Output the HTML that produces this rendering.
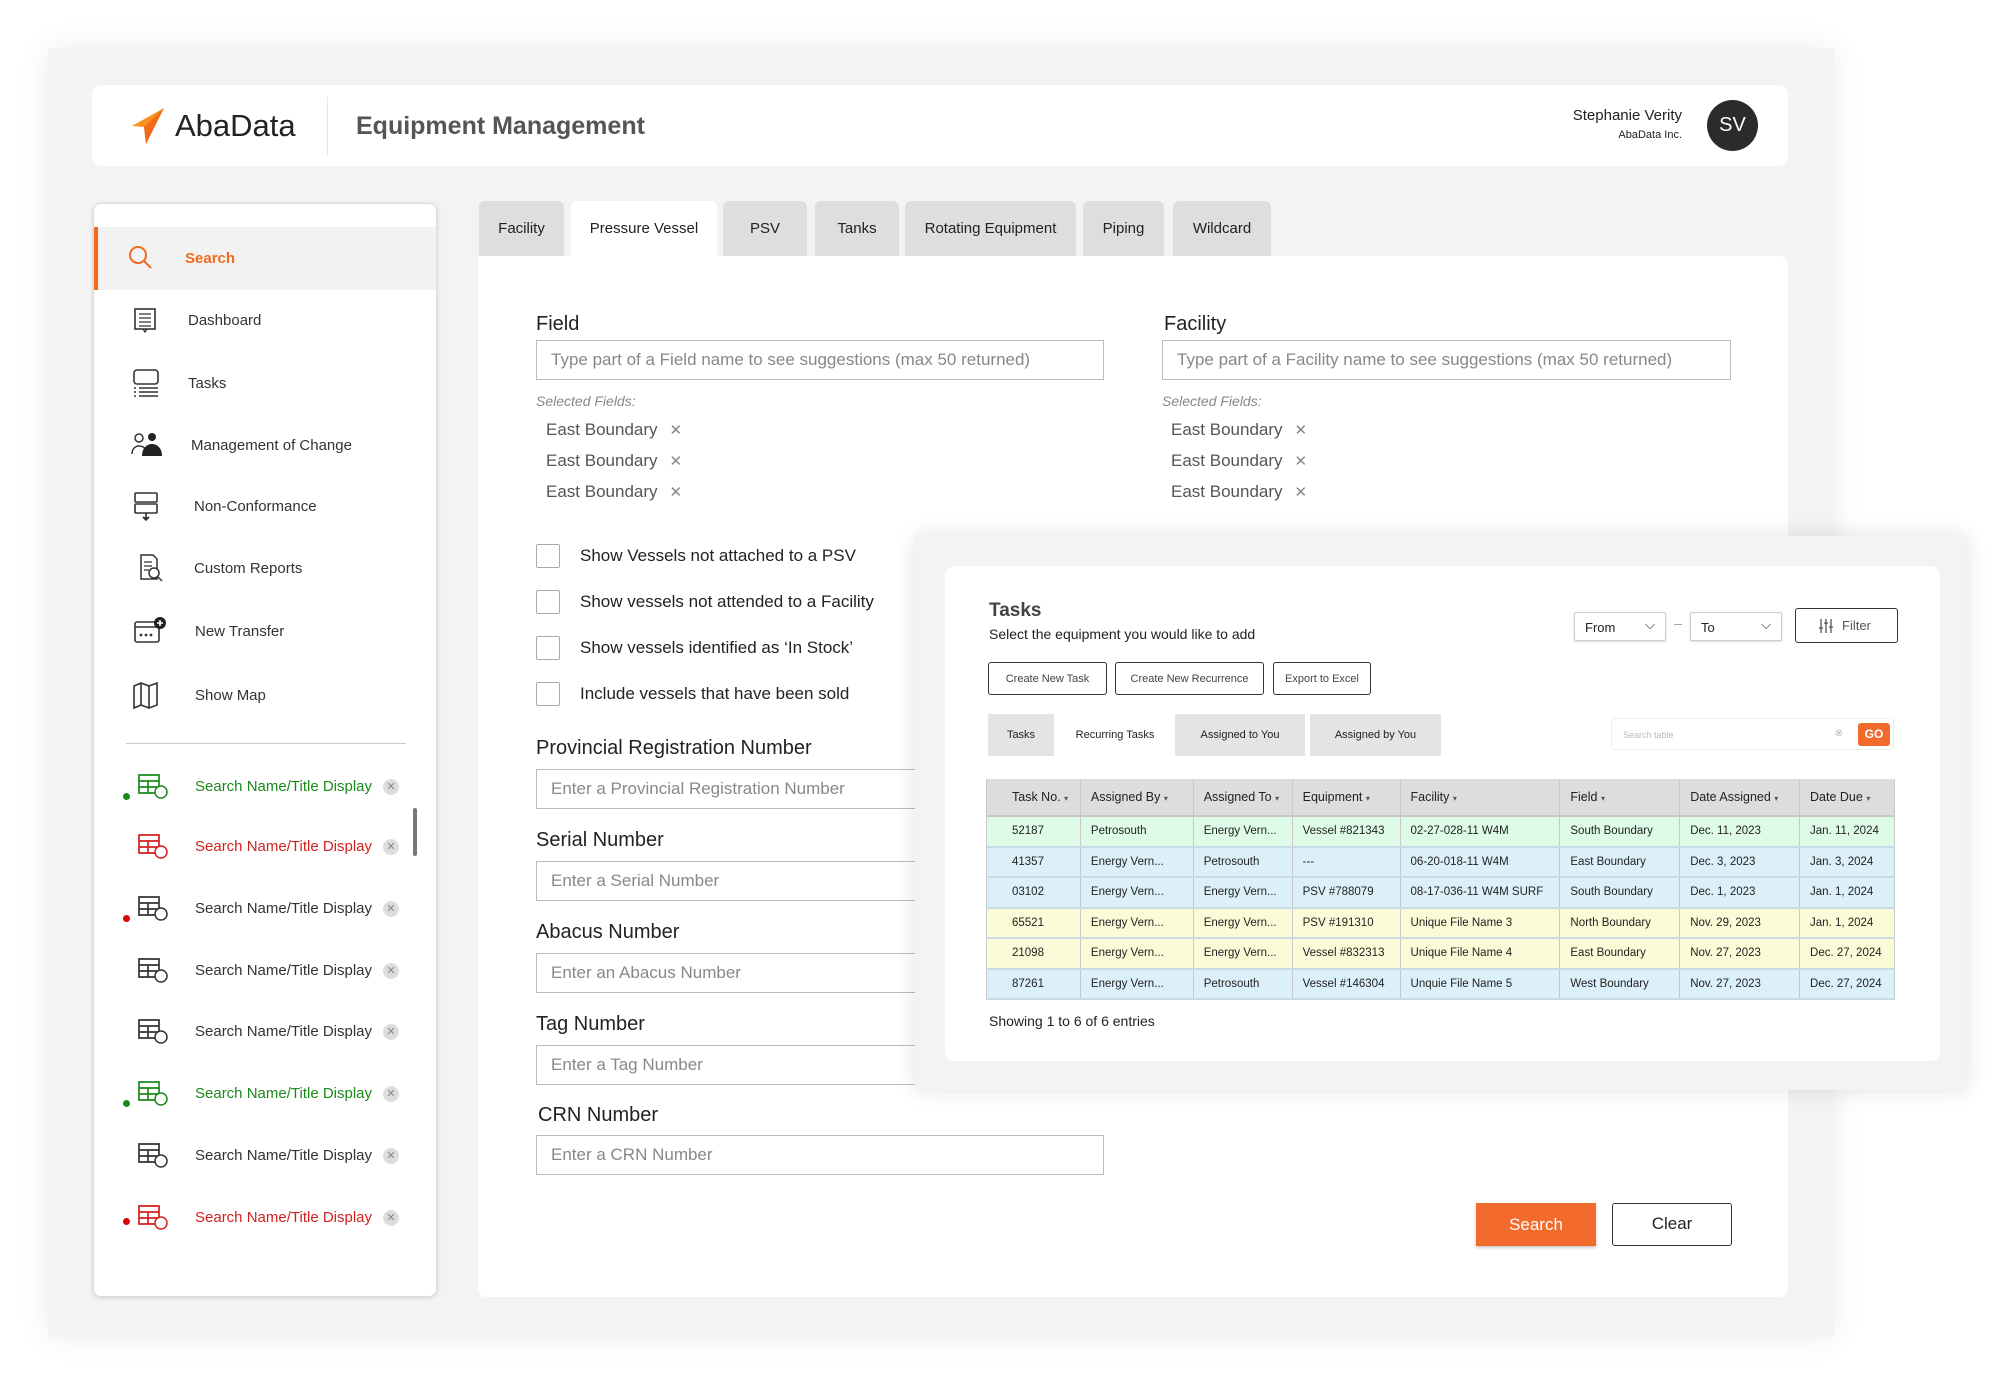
<!DOCTYPE html>
<html><head><meta charset="utf-8"><style>
*{box-sizing:border-box;margin:0;padding:0}
body{width:2000px;height:1373px;background:#fff;font-family:"Liberation Sans",sans-serif;position:relative;overflow:hidden;color:#222}
.a{position:absolute}
.outer{left:48px;top:48px;width:1786px;height:1289px;background:#f3f3f3;box-shadow:0 0 30px rgba(0,0,0,.08)}
.card{background:#fff;border-radius:10px}
.nav{left:93px;width:344px;height:62px;display:flex;align-items:center;font-size:15px;color:#333}
.nav svg{position:absolute;left:38px}
.nav span{position:absolute;left:96px}
.sv{left:93px;width:344px;height:40px;font-size:15px}
.sv svg{position:absolute;left:44px;top:6px}
.sv span{position:absolute;left:102px;top:11px}
.sv i{position:absolute;left:290px;top:12px;width:16px;height:16px;border-radius:50%;background:#ddd;color:#888;font-style:normal;font-size:11px;text-align:center;line-height:16px}
.dot{position:absolute;left:30px;top:26px;width:7px;height:7px;border-radius:50%}
.tab{top:201px;height:55px;background:#dedede;border-radius:6px 6px 0 0;font-size:15px;display:flex;align-items:center;justify-content:center;color:#222}
.lbl{font-size:20px;color:#222}
.inp{height:40px;border:1px solid #bbb;font-size:17px;color:#888;padding-left:14px;display:flex;align-items:center;background:#fff}
.chip{font-size:17px;color:#555}
.chip b{font-weight:normal;color:#888;margin-left:12px;font-size:15px}
.cb{width:24px;height:24px;border:1px solid #aaa;border-radius:2px;background:#fff}
.ct{font-size:17px;color:#222}
.btn{border:1.5px solid #333;border-radius:3px;font-size:11px;color:#444;display:flex;align-items:center;justify-content:center;background:#fff}
.st{top:714px;height:42px;background:#e4e4e4;font-size:11px;display:flex;align-items:center;justify-content:center;color:#222}
table{border-collapse:collapse;font-size:11.5px;color:#222}
td,th{border-right:1px solid #c9c9c9;padding-left:10px;text-align:left;font-weight:normal;white-space:nowrap}
th{background:#ddd;height:37px;font-size:12.5px;border-bottom:2px solid #c8c8c8}
td{height:30.5px;border-bottom:2px solid #c8dbe4}
.g td{background:#ddfbe7}.b td{background:#dcf0fa}.y td{background:#fcfbd8}
.car{font-size:8px;color:#555}
</style></head><body>
<div class="a outer"></div>
<!-- header -->
<div class="a card" style="left:92px;top:85px;width:1696px;height:81px"></div>
<svg class="a" style="left:130px;top:107px" width="36" height="38" viewBox="0 0 36 38"><path d="M34 1 L2 19 L14 20 L16 37 Z" fill="#f7931e"/><path d="M34 1 L14 20 L16 37 Z" fill="#f26b1d"/></svg>
<div class="a" style="left:175px;top:108px;font-size:31px;color:#222">AbaData</div>
<div class="a" style="left:327px;top:97px;width:1px;height:58px;background:#e5e5e5"></div>
<div class="a" style="left:356px;top:112px;font-size:25px;font-weight:bold;color:#555">Equipment Management</div>
<div class="a" style="left:1480px;top:107px;width:202px;text-align:right;font-size:15px;color:#222">Stephanie Verity</div>
<div class="a" style="left:1480px;top:129px;width:202px;text-align:right;font-size:11px;color:#222">AbaData Inc.</div>
<div class="a" style="left:1707px;top:100px;width:51px;height:51px;border-radius:50%;background:#2b2b2b;color:#fff;font-size:20px;text-align:center;line-height:51px">SV</div>
<!-- sidebar -->
<div class="a" style="left:93px;top:203px;width:344px;height:1094px;background:#fff;border:1px solid #ddd;border-radius:8px;box-shadow:0 1px 4px rgba(0,0,0,.15)"></div>
<div class="a" style="left:94px;top:227px;width:342px;height:63px;background:#f2f2f2;border-left:4px solid #f26b1d"></div>
<div class="a nav" style="top:227px;color:#f26b1d;font-weight:bold"><svg width="28" height="28" viewBox="0 0 28 28" style="left:34px"><circle cx="11" cy="11" r="8" fill="none" stroke="#f26b1d" stroke-width="2"/><path d="M17 17l7 7" stroke="#f26b1d" stroke-width="2"/></svg><span style="left:92px">Search</span></div>
<div class="a nav" style="top:289px"><svg width="28" height="28" viewBox="0 0 28 28"><rect x="4" y="3" width="20" height="20" fill="none" stroke="#333" stroke-width="1.6"/><path d="M8 8h12M8 12h12M8 16h12M8 20h12M12 23l2 3 2-3" stroke="#333" stroke-width="1.3" fill="none"/></svg><span style="left:95px">Dashboard</span></div>
<div class="a nav" style="top:352px"><svg width="30" height="30" viewBox="0 0 30 30"><rect x="3" y="2" width="24" height="14" rx="3" fill="none" stroke="#333" stroke-width="1.6"/><path d="M3 20h2M8 20h19M3 24h2M8 24h19M3 28h2M8 28h19" stroke="#333" stroke-width="1.6"/></svg><span style="left:95px">Tasks</span></div>
<div class="a nav" style="top:414px"><svg width="36" height="30" viewBox="0 0 36 30"><circle cx="8" cy="8" r="4" fill="none" stroke="#333" stroke-width="1.5"/><path d="M1 24c0-6 4-8 7-8s5 1 6 3" fill="none" stroke="#333" stroke-width="1.5"/><circle cx="21" cy="7" r="4" fill="#222"/><path d="M11 26c0-8 5-12 10-12s10 4 10 12z" fill="#222"/></svg><span style="left:98px">Management of Change</span></div>
<div class="a nav" style="top:475px"><svg width="30" height="32" viewBox="0 0 30 32"><rect x="4" y="3" width="22" height="9" rx="1" fill="none" stroke="#333" stroke-width="1.6"/><rect x="4" y="14" width="22" height="9" rx="1" fill="none" stroke="#333" stroke-width="1.6"/><path d="M15 23v5M12 27l3 3 3-3" stroke="#333" stroke-width="1.6" fill="#333"/></svg><span style="left:101px">Non-Conformance</span></div>
<div class="a nav" style="top:537px"><svg width="32" height="30" viewBox="0 0 32 30" style="left:44px"><path d="M4 2h12l4 4v20H4z" fill="none" stroke="#333" stroke-width="1.5"/><path d="M7 9h8M7 13h8M7 17h5" stroke="#333" stroke-width="1.2"/><circle cx="17" cy="20" r="5" fill="#fff" stroke="#333" stroke-width="1.5"/><path d="M21 24l4 4" stroke="#333" stroke-width="1.5"/></svg><span style="left:101px">Custom Reports</span></div>
<div class="a nav" style="top:600px"><svg width="34" height="30" viewBox="0 0 34 30" style="left:40px"><rect x="2" y="6" width="24" height="20" rx="2" fill="none" stroke="#333" stroke-width="1.6"/><path d="M2 11h24" stroke="#333" stroke-width="1.6"/><circle cx="8" cy="19" r="1.4" fill="#333"/><circle cx="13" cy="19" r="1.4" fill="#333"/><circle cx="18" cy="19" r="1.4" fill="#333"/><circle cx="27" cy="7" r="6" fill="#222"/><path d="M27 4v6M24 7h6" stroke="#fff" stroke-width="1.6"/></svg><span style="left:102px">New Transfer</span></div>
<div class="a nav" style="top:664px"><svg width="30" height="30" viewBox="0 0 30 30"><path d="M3 6l7-3 8 3 8-3v22l-8 3-8-3-7 3z M10 3v22 M18 6v22" fill="none" stroke="#333" stroke-width="1.6"/></svg><span style="left:102px">Show Map</span></div>
<div class="a" style="left:126px;top:743px;width:280px;height:1px;background:#ccc"></div>
<div class="a" style="left:413px;top:808px;width:4px;height:48px;background:#777;border-radius:2px"></div>
<div id="saved"></div>
<!-- tabs -->
<div class="a tab" style="left:479px;width:85px">Facility</div>
<div class="a tab" style="left:571px;width:146px;background:#fff">Pressure Vessel</div>
<div class="a tab" style="left:723px;width:84px">PSV</div>
<div class="a tab" style="left:815px;width:84px">Tanks</div>
<div class="a tab" style="left:905px;width:171px">Rotating Equipment</div>
<div class="a tab" style="left:1083px;width:81px">Piping</div>
<div class="a tab" style="left:1173px;width:98px">Wildcard</div>
<div class="a" style="left:478px;top:256px;width:1310px;height:1041px;background:#fff;border-radius:0 8px 8px 8px"></div>
<div class="a lbl" style="left:536px;top:313px">Field</div>
<div class="a inp" style="left:536px;top:340px;width:568px">Type part of a Field name to see suggestions (max 50 returned)</div>
<div class="a lbl" style="left:1164px;top:313px">Facility</div>
<div class="a inp" style="left:1162px;top:340px;width:569px">Type part of a Facility name to see suggestions (max 50 returned)</div>
<div class="a" style="left:536px;top:393px;font-size:14px;font-style:italic;color:#888">Selected Fields:</div>
<div class="a" style="left:1162px;top:393px;font-size:14px;font-style:italic;color:#888">Selected Fields:</div>
<div class="a chip" style="left:546px;top:420px">East Boundary<b>✕</b></div>
<div class="a chip" style="left:546px;top:451px">East Boundary<b>✕</b></div>
<div class="a chip" style="left:546px;top:482px">East Boundary<b>✕</b></div>
<div class="a chip" style="left:1171px;top:420px">East Boundary<b>✕</b></div>
<div class="a chip" style="left:1171px;top:451px">East Boundary<b>✕</b></div>
<div class="a chip" style="left:1171px;top:482px">East Boundary<b>✕</b></div>
<div class="a cb" style="left:536px;top:544px"></div><div class="a ct" style="left:580px;top:546px">Show Vessels not attached to a PSV</div>
<div class="a cb" style="left:536px;top:590px"></div><div class="a ct" style="left:580px;top:592px">Show vessels not attended to a Facility</div>
<div class="a cb" style="left:536px;top:636px"></div><div class="a ct" style="left:580px;top:638px">Show vessels identified as ‘In Stock’</div>
<div class="a cb" style="left:536px;top:682px"></div><div class="a ct" style="left:580px;top:684px">Include vessels that have been sold</div>
<div class="a lbl" style="left:536px;top:737px">Provincial Registration Number</div>
<div class="a inp" style="left:536px;top:769px;width:568px">Enter a Provincial Registration Number</div>
<div class="a lbl" style="left:536px;top:829px">Serial Number</div>
<div class="a inp" style="left:536px;top:861px;width:568px">Enter a Serial Number</div>
<div class="a lbl" style="left:536px;top:921px">Abacus Number</div>
<div class="a inp" style="left:536px;top:953px;width:568px">Enter an Abacus Number</div>
<div class="a lbl" style="left:536px;top:1013px">Tag Number</div>
<div class="a inp" style="left:536px;top:1045px;width:568px">Enter a Tag Number</div>
<div class="a lbl" style="left:538px;top:1104px">CRN Number</div>
<div class="a inp" style="left:536px;top:1135px;width:568px">Enter a CRN Number</div>
<div class="a" style="left:1476px;top:1203px;width:120px;height:43px;background:#f26b2d;color:#fff;font-size:17px;text-align:center;line-height:43px;box-shadow:0 2px 3px rgba(0,0,0,.2)">Search</div>
<div class="a" style="left:1612px;top:1203px;width:120px;height:43px;border:1.5px solid #333;border-radius:3px;font-size:17px;text-align:center;line-height:40px">Clear</div>
<!-- overlay -->
<div class="a" style="left:915px;top:536px;width:1052px;height:554px;background:#f3f3f3;box-shadow:0 0 20px rgba(0,0,0,.12)"></div>
<div class="a card" style="left:945px;top:566px;width:995px;height:495px"></div>
<div class="a" style="left:989px;top:600px;font-size:19px;font-weight:bold;color:#444">Tasks</div>
<div class="a" style="left:989px;top:626px;font-size:14px;color:#222">Select the equipment you would like to add</div>
<div class="a" style="left:1574px;top:612px;width:92px;height:29px;border:1px solid #ccc;border-radius:2px;font-size:13px;padding:7px 10px;box-shadow:0 1px 2px rgba(0,0,0,.15)">From<span style="position:absolute;right:10px;top:4px">⌵</span></div>
<div class="a" style="left:1674px;top:624px;width:8px;height:1px;background:#aaa"></div>
<div class="a" style="left:1690px;top:612px;width:92px;height:29px;border:1px solid #ccc;border-radius:2px;font-size:13px;padding:7px 10px;box-shadow:0 1px 2px rgba(0,0,0,.15)">To<span style="position:absolute;right:10px;top:4px">⌵</span></div>
<div class="a" style="left:1795px;top:608px;width:103px;height:35px;border:1.5px solid #333;border-radius:3px;font-size:13px;color:#555;padding:9px 0 0 46px"><svg style="position:absolute;left:22px;top:9px" width="16" height="16" viewBox="0 0 16 16"><path d="M3 1v14M8 1v14M13 1v14" stroke="#555" stroke-width="1.3"/><path d="M1 10h4M6 5h4M11 9h4" stroke="#555" stroke-width="1.3"/></svg>Filter</div>
<div class="a btn" style="left:988px;top:662px;width:119px;height:33px">Create New Task</div>
<div class="a btn" style="left:1115px;top:662px;width:149px;height:33px">Create New Recurrence</div>
<div class="a btn" style="left:1273px;top:662px;width:98px;height:33px">Export to Excel</div>
<div class="a st" style="left:988px;width:66px">Tasks</div>
<div class="a st" style="left:1060px;width:110px;background:#fff">Recurring Tasks</div>
<div class="a st" style="left:1175px;width:130px">Assigned to You</div>
<div class="a st" style="left:1310px;width:131px">Assigned by You</div>
<div class="a" style="left:1611px;top:718px;width:283px;height:32px;border:1px solid #eee;border-radius:3px;background:#fff;font-size:9px;color:#bbb;padding:11px 0 0 11px">Search table<span style="position:absolute;right:50px;top:9px;font-size:10px">⊗</span><div style="position:absolute;right:3px;top:4px;width:32px;height:23px;background:#f26b2d;border-radius:3px;color:#fff;font-size:12px;font-weight:bold;text-align:center;line-height:23px">GO</div></div>
<table class="a" style="left:986px;top:779px;width:909px;border-left:1px solid #c9c9c9">
<colgroup><col style="width:94px"><col style="width:113px"><col style="width:99px"><col style="width:108px"><col style="width:160px"><col style="width:120px"><col style="width:120px"><col style="width:95px"></colgroup>
<tr><th style="padding-left:25px">Task No. <span class="car">▾</span></th><th>Assigned By <span class="car">▾</span></th><th>Assigned To <span class="car">▾</span></th><th>Equipment <span class="car">▾</span></th><th>Facility <span class="car">▾</span></th><th>Field <span class="car">▾</span></th><th>Date Assigned <span class="car">▾</span></th><th>Date Due <span class="car">▾</span></th></tr>
<tr class="g"><td style="padding-left:25px">52187</td><td>Petrosouth</td><td>Energy Vern...</td><td>Vessel #821343</td><td>02-27-028-11 W4M</td><td>South Boundary</td><td>Dec. 11, 2023</td><td>Jan. 11, 2024</td></tr>
<tr class="b"><td style="padding-left:25px">41357</td><td>Energy Vern...</td><td>Petrosouth</td><td>---</td><td>06-20-018-11 W4M</td><td>East Boundary</td><td>Dec. 3, 2023</td><td>Jan. 3, 2024</td></tr>
<tr class="b"><td style="padding-left:25px">03102</td><td>Energy Vern...</td><td>Energy Vern...</td><td>PSV #788079</td><td>08-17-036-11 W4M SURF</td><td>South Boundary</td><td>Dec. 1, 2023</td><td>Jan. 1, 2024</td></tr>
<tr class="y"><td style="padding-left:25px">65521</td><td>Energy Vern...</td><td>Energy Vern...</td><td>PSV #191310</td><td>Unique File Name 3</td><td>North Boundary</td><td>Nov. 29, 2023</td><td>Jan. 1, 2024</td></tr>
<tr class="y"><td style="padding-left:25px">21098</td><td>Energy Vern...</td><td>Energy Vern...</td><td>Vessel #832313</td><td>Unique File Name 4</td><td>East Boundary</td><td>Nov. 27, 2023</td><td>Dec. 27, 2024</td></tr>
<tr class="b"><td style="padding-left:25px">87261</td><td>Energy Vern...</td><td>Petrosouth</td><td>Vessel #146304</td><td>Unquie File Name 5</td><td>West Boundary</td><td>Nov. 27, 2023</td><td>Dec. 27, 2024</td></tr>
</table>
<div class="a" style="left:989px;top:1013px;font-size:14px;color:#222">Showing 1 to 6 of 6 entries</div>
<!-- saved searches -->
<div class="a sv" style="top:767px;color:#1a8a1a"><b class="dot" style="background:#1a8a1a"></b><svg width="32" height="26" viewBox="0 0 32 26"><path d="M2 2h20v18H2zM2 8h20M2 14h20M11 8v12" fill="none" stroke="#1a8a1a" stroke-width="1.7"/><circle cx="24" cy="19" r="6" fill="#fff" stroke="#1a8a1a" stroke-width="1.5"/><path d="M21.5 19h.1M24 19h.1M26.5 19h.1" stroke="#1a8a1a" stroke-width="1.6"/></svg><span>Search Name/Title Display</span><i>✕</i></div>
<div class="a sv" style="top:827px;color:#d41f1f"><svg width="32" height="26" viewBox="0 0 32 26"><path d="M2 2h20v18H2zM2 8h20M2 14h20M11 8v12" fill="none" stroke="#d41f1f" stroke-width="1.7"/><circle cx="24" cy="19" r="6" fill="#fff" stroke="#d41f1f" stroke-width="1.5"/><path d="M21.5 19h.1M24 19h.1M26.5 19h.1" stroke="#d41f1f" stroke-width="1.6"/></svg><span>Search Name/Title Display</span><i>✕</i></div>
<div class="a sv" style="top:889px;color:#333"><b class="dot" style="background:#d00"></b><svg width="32" height="26" viewBox="0 0 32 26"><path d="M2 2h20v18H2zM2 8h20M2 14h20M11 8v12" fill="none" stroke="#333" stroke-width="1.7"/><circle cx="24" cy="19" r="6" fill="#fff" stroke="#333" stroke-width="1.5"/><path d="M21.5 19h.1M24 19h.1M26.5 19h.1" stroke="#333" stroke-width="1.6"/></svg><span>Search Name/Title Display</span><i>✕</i></div>
<div class="a sv" style="top:951px;color:#333"><svg width="32" height="26" viewBox="0 0 32 26"><path d="M2 2h20v18H2zM2 8h20M2 14h20M11 8v12" fill="none" stroke="#333" stroke-width="1.7"/><circle cx="24" cy="19" r="6" fill="#fff" stroke="#333" stroke-width="1.5"/><path d="M21.5 19h.1M24 19h.1M26.5 19h.1" stroke="#333" stroke-width="1.6"/></svg><span>Search Name/Title Display</span><i>✕</i></div>
<div class="a sv" style="top:1012px;color:#333"><svg width="32" height="26" viewBox="0 0 32 26"><path d="M2 2h20v18H2zM2 8h20M2 14h20M11 8v12" fill="none" stroke="#333" stroke-width="1.7"/><circle cx="24" cy="19" r="6" fill="#fff" stroke="#333" stroke-width="1.5"/><path d="M21.5 19h.1M24 19h.1M26.5 19h.1" stroke="#333" stroke-width="1.6"/></svg><span>Search Name/Title Display</span><i>✕</i></div>
<div class="a sv" style="top:1074px;color:#1a8a1a"><b class="dot" style="background:#1a8a1a"></b><svg width="32" height="26" viewBox="0 0 32 26"><path d="M2 2h20v18H2zM2 8h20M2 14h20M11 8v12" fill="none" stroke="#1a8a1a" stroke-width="1.7"/><circle cx="24" cy="19" r="6" fill="#fff" stroke="#1a8a1a" stroke-width="1.5"/><path d="M21.5 19h.1M24 19h.1M26.5 19h.1" stroke="#1a8a1a" stroke-width="1.6"/></svg><span>Search Name/Title Display</span><i>✕</i></div>
<div class="a sv" style="top:1136px;color:#333"><svg width="32" height="26" viewBox="0 0 32 26"><path d="M2 2h20v18H2zM2 8h20M2 14h20M11 8v12" fill="none" stroke="#333" stroke-width="1.7"/><circle cx="24" cy="19" r="6" fill="#fff" stroke="#333" stroke-width="1.5"/><path d="M21.5 19h.1M24 19h.1M26.5 19h.1" stroke="#333" stroke-width="1.6"/></svg><span>Search Name/Title Display</span><i>✕</i></div>
<div class="a sv" style="top:1198px;color:#d41f1f"><b class="dot" style="background:#d00;top:20px"></b><svg width="32" height="26" viewBox="0 0 32 26"><path d="M2 2h20v18H2zM2 8h20M2 14h20M11 8v12" fill="none" stroke="#d41f1f" stroke-width="1.7"/><circle cx="24" cy="19" r="6" fill="#fff" stroke="#d41f1f" stroke-width="1.5"/><path d="M21.5 19h.1M24 19h.1M26.5 19h.1" stroke="#d41f1f" stroke-width="1.6"/></svg><span>Search Name/Title Display</span><i>✕</i></div>
</body></html>
